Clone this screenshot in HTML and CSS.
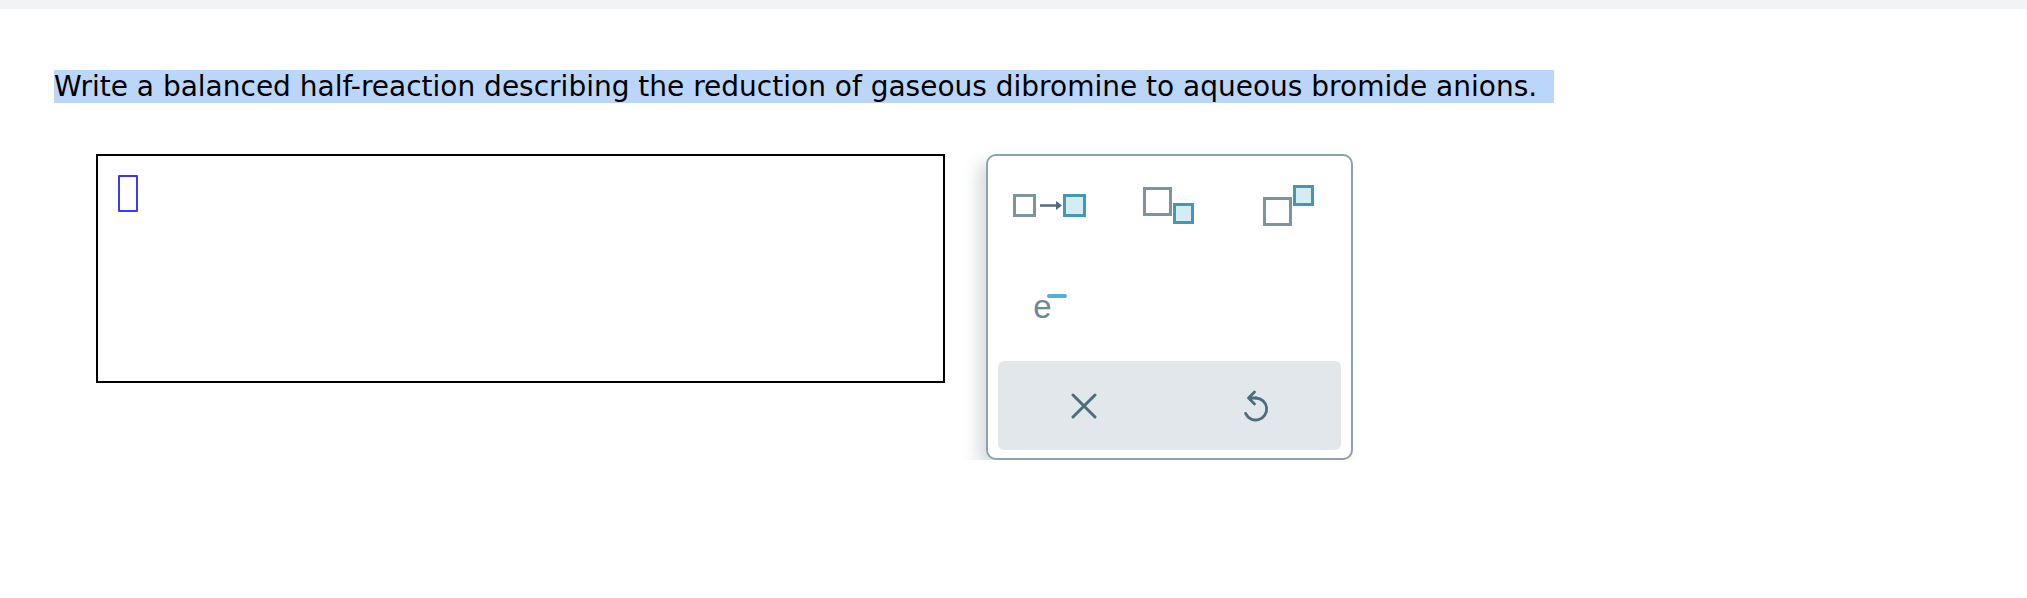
FILE: index.html
```html
<!DOCTYPE html>
<html lang="en">
<head>
<meta charset="utf-8">
<title>Half-reaction</title>
<link rel="stylesheet" href="styles.css">
</head>
<body>
<div class="topbar"></div>
<main class="content">
  <p class="prompt"><span class="hl">Write a balanced half-reaction describing the reduction of gaseous dibromine to aqueous bromide anions. </span></p>
  <div class="workspace">
    <div class="answer"><span class="cursor"></span></div>
    <div class="palette">
      <div class="tools">
        <button class="tool" aria-label="reaction arrow">
          <svg width="74" height="24" viewBox="0 0 74 24">
            <rect x="1.5" y="1.5" width="20" height="20" fill="#fff" stroke="#7e949d" stroke-width="3"/>
            <path d="M27 11.5 H44" stroke="#4f6b78" stroke-width="2.5"/>
            <path d="M43 7 L49 11.5 L43 16 Z" fill="#4f6b78"/>
            <rect x="51.5" y="1.5" width="20" height="20" fill="#d5ecf3" stroke="#4399b4" stroke-width="3"/>
          </svg>
        </button>
        <button class="tool" aria-label="subscript">
          <svg width="54" height="40" viewBox="0 0 54 40">
            <rect x="2.5" y="2.5" width="26" height="26" fill="#fff" stroke="#7e949d" stroke-width="3"/>
            <rect x="32.5" y="18.5" width="18" height="18" fill="#d5ecf3" stroke="#4399b4" stroke-width="3"/>
          </svg>
        </button>
        <button class="tool" aria-label="superscript">
          <svg width="54" height="44" viewBox="0 0 54 44">
            <rect x="2.5" y="14.5" width="26" height="26" fill="#fff" stroke="#7e949d" stroke-width="3"/>
            <rect x="32.5" y="2.5" width="18" height="18" fill="#d5ecf3" stroke="#4399b4" stroke-width="3"/>
          </svg>
        </button>
        <button class="tool electron" aria-label="electron">
          <span class="e">e</span><span class="minus"></span>
        </button>
      </div>
      <div class="actions">
        <button class="action" aria-label="clear">
          <svg width="26" height="26" viewBox="0 0 26 26">
            <path d="M2 2 L24 24 M24 2 L2 24" stroke="#4c6e7c" stroke-width="3" stroke-linecap="round"/>
          </svg>
        </button>
        <button class="action" aria-label="undo">
          <svg width="30" height="34" viewBox="0 0 30 34">
            <path d="M16 9 A11 11 0 1 1 5.6 24.4" fill="none" stroke="#4c6e7c" stroke-width="2.8" stroke-linecap="round"/>
            <path d="M14.5 3 L8.5 9 L14.5 15 M8.5 9 H16" fill="none" stroke="#4c6e7c" stroke-width="2.8" stroke-linecap="round" stroke-linejoin="round"/>
          </svg>
        </button>
      </div>
    </div>
  </div>
</main>
</body>
</html>
```

FILE: styles.css
```css
html, body {
  margin: 0;
  padding: 0;
  background: #ffffff;
}

body {
  font-family: "DejaVu Sans", Verdana, sans-serif;
  color: #000;
}

.topbar {
  height: 9px;
  background: #f1f3f4;
}

.content {
  padding: 0 0 0 54px;
}

.prompt {
  margin: 61px 0 0 0;
  font-size: 28px;
  line-height: 33px;
  height: 33px;
}

.hl {
  display: inline-block;
  background: #bcd6fa;
  height: 33px;
  line-height: 33px;
  padding-right: 8px;
  white-space: pre;
}

.workspace {
  display: flex;
  align-items: flex-start;
  gap: 41px;
  margin: 51px 0 0 42px;
}

.answer {
  box-sizing: border-box;
  width: 849px;
  height: 229px;
  border: 2px solid #000;
  padding: 19px 0 0 20px;
}

.cursor {
  display: block;
  box-sizing: border-box;
  width: 20px;
  height: 37px;
  border: 2px solid #3b3bf7;
  border-radius: 1px;
}

.palette {
  box-sizing: border-box;
  width: 367px;
  height: 306px;
  border: 2px solid #8fa1aa;
  border-radius: 10px;
  background: #fff;
  box-shadow: -8px 8px 16px rgba(60, 80, 90, 0.2);
  display: flex;
  flex-direction: column;
  padding: 0 10px 8px 10px;
}

.tools {
  display: grid;
  grid-template-columns: repeat(3, 1fr);
  grid-template-rows: 100px 98px;
  margin: 0 -8px;
}

.tool {
  border: 0;
  background: transparent;
  padding: 0;
  display: flex;
  align-items: center;
  justify-content: center;
}

.electron {
  justify-content: center;
}

.e {
  font-family: "Liberation Sans", Arial, sans-serif;
  font-size: 33px;
  line-height: 1;
  color: #6e8893;
  margin-top: 2px;
}

.minus {
  display: block;
  width: 20px;
  height: 4px;
  border-radius: 2px;
  background: #53b2cf;
  margin: -18px 0 0 -5px;
}

.actions {
  margin-top: 7px;
  flex: 1;
  display: grid;
  grid-template-columns: 1fr 1fr;
  background: #e1e7ea;
  border-radius: 6px;
}

.action {
  border: 0;
  background: transparent;
  padding: 0;
  display: flex;
  align-items: center;
  justify-content: center;
}
```
